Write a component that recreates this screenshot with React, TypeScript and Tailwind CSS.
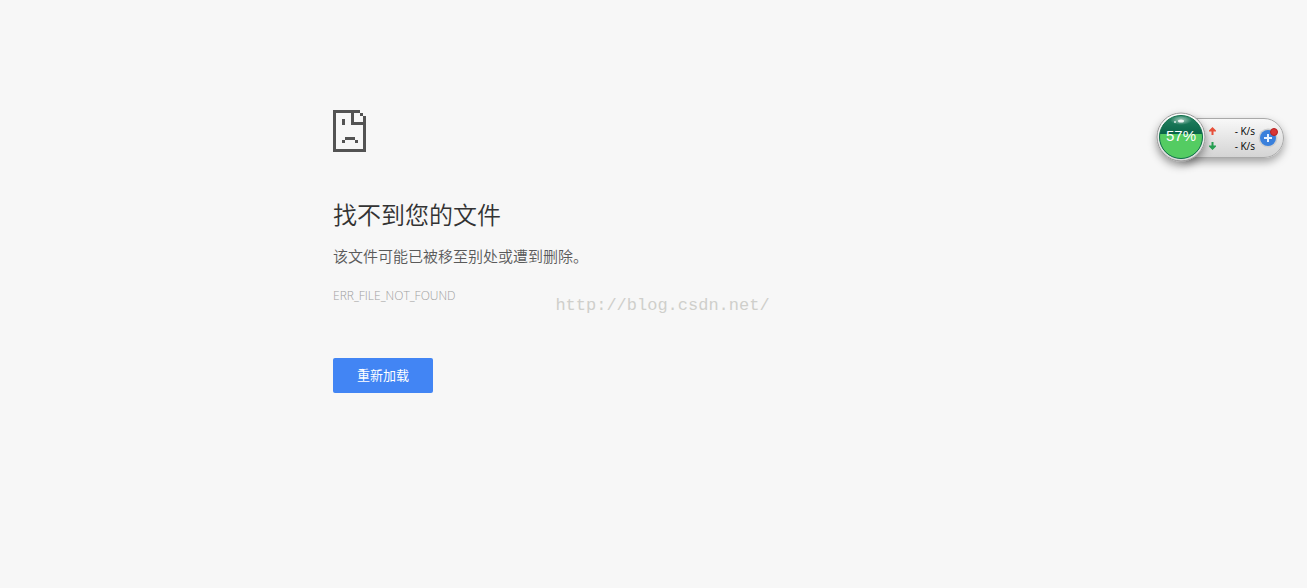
import React from "react";

// --- SUB-COMPONENTS ---

function SadFileIcon() {
  return (
    <svg width="33" height="42" viewBox="0 0 33 42" fill="#535353" shapeRendering="crispEdges" aria-hidden="true">
      <path d="M0 0H27V3H21V12H33V42H0ZM3 3V39H30V15H18V3Z" fillRule="evenodd" />
      <path d="M27 3h3v3h-3zM30 6h3v9h-3z" />
      <path d="M9 9h3v6h-3z" />
      <path d="M12 27h10v3h-10zM9 30h3v3h-3zM22 30h3v3h-3z" />
    </svg>
  );
}

function MemoryBall({ percent }: { percent: number }) {
  return (
    <div className="relative z-10 h-[50px] w-[50px] shrink-0">
      <svg className="block overflow-visible" width="50" height="50" viewBox="0 0 50 50" aria-hidden="true">
        <defs>
          <linearGradient id="ballTop" x1="0" y1="0" x2="0" y2="1">
            <stop offset="0" stopColor="#2a8a68" />
            <stop offset="0.45" stopColor="#086347" />
          </linearGradient>
          <linearGradient id="ballRim" x1="0" y1="0" x2="0" y2="1">
            <stop offset="0" stopColor="#ffffff" />
            <stop offset="1" stopColor="#d8d8d8" />
          </linearGradient>
          <radialGradient id="ballShine">
            <stop offset="0" stopColor="#ffffff" stopOpacity="0.6" />
            <stop offset="1" stopColor="#ffffff" stopOpacity="0" />
          </radialGradient>
          <filter id="ballShadow" x="-30%" y="-30%" width="160%" height="160%">
            <feDropShadow dx="0" dy="4" stdDeviation="4" floodColor="#000000" floodOpacity="0.4" />
          </filter>
          <clipPath id="ballClip">
            <circle cx="25" cy="25" r="21.5" />
          </clipPath>
        </defs>
        <circle cx="25" cy="25" r="24" fill="url(#ballRim)" stroke="#999999" filter="url(#ballShadow)" />
        <g clipPath="url(#ballClip)">
          <rect width="50" height="50" fill="url(#ballTop)" />
          <rect y="22" width="50" height="28" fill="#54cc62" />
          <ellipse cx="25" cy="8" rx="11" ry="5" fill="url(#ballShine)" />
          <ellipse cx="25" cy="9" rx="3" ry="1.5" fill="#ffffff" fillOpacity="0.85" />
          <circle cx="19" cy="10" r="1" fill="#ffffff" fillOpacity="0.8" />
        </g>
        <circle cx="25" cy="25" r="21.5" fill="none" stroke="#12704c" />
      </svg>
      <span className="absolute inset-0 flex items-center justify-center pb-1 font-['Liberation_Sans',sans-serif] text-[15px] leading-none text-white">
        {percent}%
      </span>
    </div>
  );
}

function SpeedRow({ up = false }: { up?: boolean }) {
  return (
    <div className="flex h-[15px] items-center justify-between">
      <svg width="7" height="8" viewBox="0 0 7 8" aria-hidden="true">
        {up ? (
          <path d="M3.5 0L7 3.5V4.5H4.5V8H2.5V4.5H0V3.5Z" fill="#e8503a" />
        ) : (
          <path d="M3.5 8L7 4.5V3.5H4.5V0H2.5V3.5H0V4.5Z" fill="#26a052" />
        )}
      </svg>
      <span className="font-['Open_Sans',sans-serif] text-[10px] leading-none text-black">- K/s</span>
    </div>
  );
}

function SpeedWidget() {
  return (
    <aside className="absolute top-[112px] right-[23px] flex items-start">
      <MemoryBall percent={57} />
      <div className="mt-1.5 -ml-6 flex h-10 w-[102px] items-center rounded-r-full border border-[#a9a9a9] bg-linear-to-b from-[#f8f8f8] to-[#d4d4d4] pl-[26px] shadow-[0_4px_8px_rgba(0,0,0,0.35)]">
        <div className="w-[46px]">
          <SpeedRow up />
          <SpeedRow />
        </div>
        <button type="button" aria-label="加速" className="ml-[3px] block">
          <svg width="20" height="22" viewBox="0 0 20 22" aria-hidden="true">
            <circle cx="10" cy="11" r="9.5" fill="#cfcfcf" />
            <circle cx="10" cy="11" r="8" fill="#3a80dc" />
            <path d="M6 11h8M10 7v8" stroke="#e8f1ff" strokeWidth="2" />
            <circle cx="16" cy="5" r="3.5" fill="#d93636" stroke="#b52222" />
          </svg>
        </button>
      </div>
    </aside>
  );
}

// --- PAGE ---

export default function App() {
  return (
    <div className="relative min-h-screen bg-[#f7f7f7] font-['Open_Sans','Noto_Sans_CJK_SC',sans-serif]">
      <main className="mx-auto w-full max-w-[641px] pt-[110px]">
        <SadFileIcon />
        <h1 className="mt-[45px] text-2xl leading-9 font-[350] text-[#333333]">找不到您的文件</h1>
        <p className="mt-[11px] text-[15px] leading-6 font-[350] text-[#5a5a5a]">该文件可能已被移至别处或遭到删除。</p>
        <p className="mt-[18px] text-xs leading-5 font-light text-[#a0a0a0]">ERR_FILE_NOT_FOUND</p>
        <button
          type="button"
          onClick={() => window.location.reload()}
          className="mt-[52px] h-[35px] rounded-xs bg-[#4285f4] px-6 text-[13px] leading-none text-white"
        >
          重新加载
        </button>
      </main>

      <p className="pointer-events-none absolute inset-x-0 top-[296px] pl-[18px] text-center font-['Liberation_Mono',monospace] text-[17px] leading-5 text-[#cfcfcb]">
        http://blog.csdn.net/
      </p>

      <SpeedWidget />
    </div>
  );
}
